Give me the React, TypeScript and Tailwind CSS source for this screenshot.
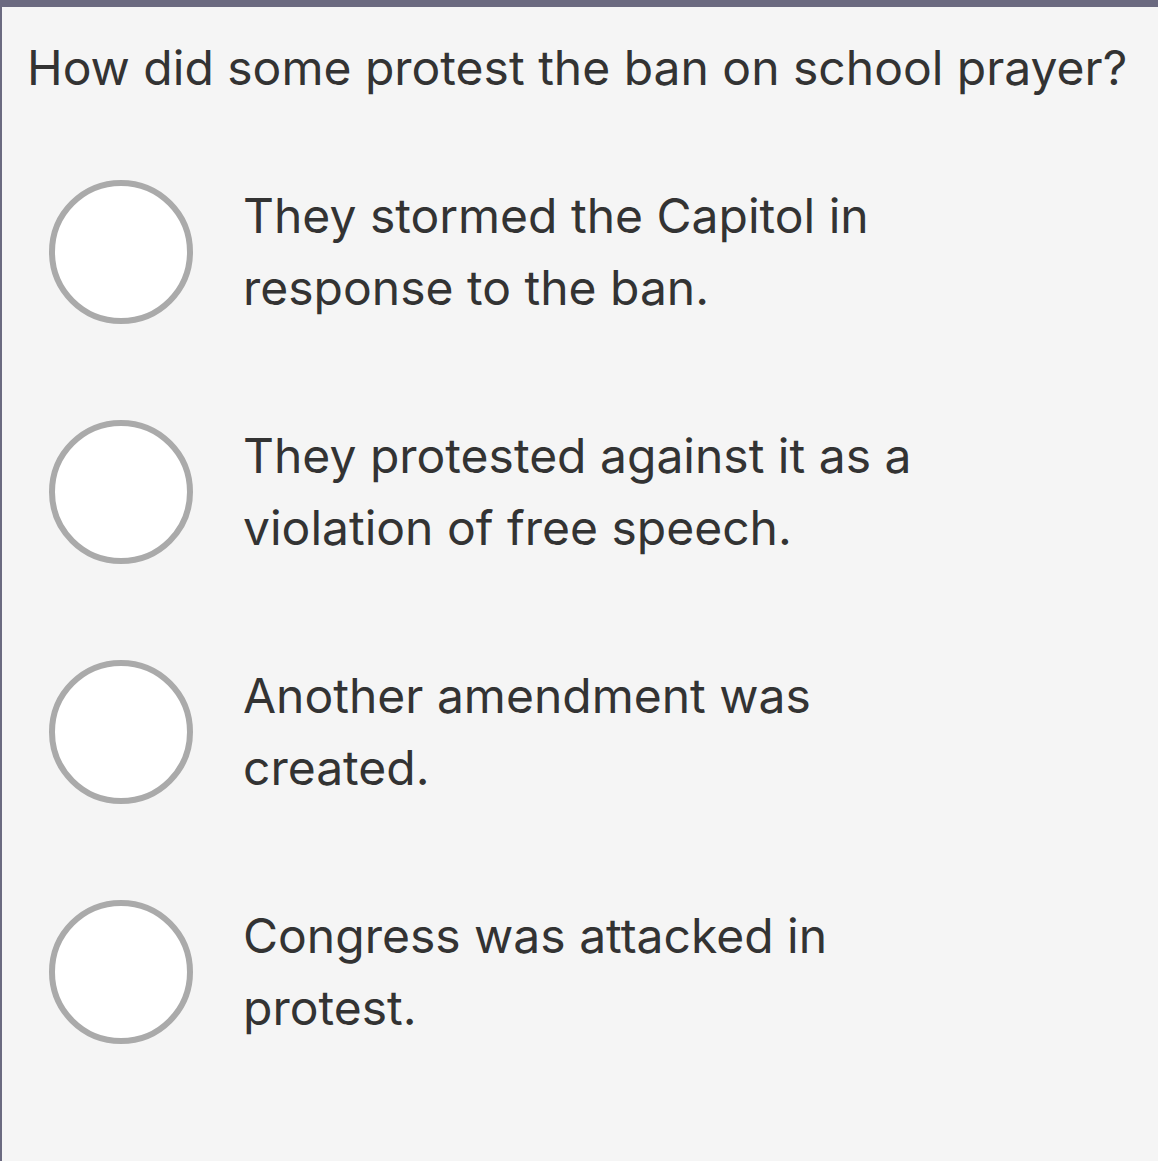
const options = [
  'They stormed the Capitol in response to the ban.',
  'They protested against it as a violation of free speech.',
  'Another amendment was created.',
  'Congress was attacked in protest.',
]

export default function App() {
  return (
    <div
      className="w-[1158px] h-[1161px] bg-[#f5f5f5] border-t-[7px] border-l-2 border-[#6b6a80] overflow-hidden text-[#333333]"
      style={{ fontFamily: "Inter, 'Noto Sans', sans-serif" }}
    >
      <h1 className="pl-[25px] pt-[32px] text-[48px] leading-[58px] font-normal whitespace-nowrap">
        How did some protest the ban on school prayer?
      </h1>
      <div className="flex flex-col gap-[96px] mt-[83px] pl-[47px]">
        {options.map((text) => (
          <div key={text} className="flex items-start gap-[50px]">
            <div className="w-[144px] h-[144px] shrink-0 rounded-full bg-white border-[6px] border-[#aaaaaa]" />
            <p className="w-[700px] text-[48px] leading-[72px]">{text}</p>
          </div>
        ))}
      </div>
    </div>
  )
}
